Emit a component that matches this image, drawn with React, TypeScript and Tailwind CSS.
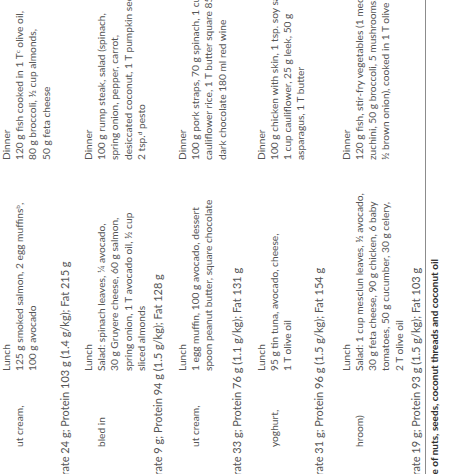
import React from "react";

type Row = {
  gap: string;
  sumGap: string;
  breakfast: string;
  lunch: React.ReactNode[];
  dinner: React.ReactNode[];
  carbs: string;
  rest: string;
};

const sup = (s: string) => <sup className="text-[6.5px]">{s}</sup>;

const rows: Row[] = [
  {
    gap: "mt-[-2.6px]",
    sumGap: "mt-[5.2px]",
    breakfast: "ut cream,",
    lunch: ["Lunch", <>125 g smoked salmon, 2 egg muffins{sup("b")},</>, "100 g avocado"],
    dinner: [
      "Dinner",
      <>120 g fish cooked in 1 T{sup("c")} olive oil,</>,
      "80 g broccoli, ½ cup almonds,",
      "50 g feta cheese",
    ],
    carbs: "Carbohyd",
    rest: "rate 24 g; Protein 103 g (1.4 g/kg); Fat 215 g",
  },
  {
    gap: "mt-[10.8px]",
    sumGap: "mt-[3px]",
    breakfast: "bled in",
    lunch: [
      "Lunch",
      "Salad: spinach leaves, ¼ avocado,",
      "30 g Gruyere cheese, 60 g salmon,",
      "spring onion, 1 T avocado oil, ½ cup",
      "sliced almonds",
    ],
    dinner: [
      "Dinner",
      "100 g rump steak, salad (spinach,",
      "spring onion, pepper, carrot,",
      "desiccated coconut, 1 T pumpkin seeds",
      <>2 tsp.{sup("d")} pesto</>,
    ],
    carbs: "Carbohyd",
    rest: "rate 9 g; Protein 94 g (1.5 g/kg); Fat 128 g",
  },
  {
    gap: "mt-[11.8px]",
    sumGap: "mt-[1px]",
    breakfast: "ut cream,",
    lunch: ["Lunch", "1 egg muffin, 100 g avocado, dessert", "spoon peanut butter, square chocolate"],
    dinner: [
      "Dinner",
      "100 g pork straps, 70 g spinach, 1 cup",
      "cauliflower rice, 1 T butter square 85%",
      "dark chocolate 180 ml red wine",
    ],
    carbs: "Carbohyd",
    rest: "rate 33 g; Protein 76 g (1.1 g/kg); Fat 131 g",
  },
  {
    gap: "mt-[11.8px]",
    sumGap: "mt-[4.2px]",
    breakfast: "yoghurt,",
    lunch: ["Lunch", "95 g tin tuna, avocado, cheese,", "1 T olive oil"],
    dinner: [
      "Dinner",
      "100 g chicken with skin, 1 tsp. soy sauce,",
      "1 cup cauliflower, 25 g leek, 50 g",
      "asparagus, 1 T butter",
    ],
    carbs: "Carbohyd",
    rest: "rate 31 g; Protein 96 g (1.5 g/kg); Fat 154 g",
  },
  {
    gap: "mt-[14.8px]",
    sumGap: "mt-[3px]",
    breakfast: "hroom)",
    lunch: [
      "Lunch",
      "Salad: 1 cup mesclun leaves, ½ avocado,",
      "30 g feta cheese, 90 g chicken, 6 baby",
      "tomatoes, 50 g cucumber, 30 g celery,",
      "2 T olive oil",
    ],
    dinner: [
      "Dinner",
      "120 g fish, stir-fry vegetables (1 medium",
      "zuchini, 50 g broccoli, 5 mushrooms,",
      "½ brown onion), cooked in 1 T olive oil",
    ],
    carbs: "Carbohyd",
    rest: "rate 19 g; Protein 93 g (1.5 g/kg); Fat 103 g",
  },
];

function Lines({ items }: { items: React.ReactNode[] }) {
  return (
    <>
      {items.map((t, i) => (
        <div key={i} className="whitespace-nowrap">
          {t}
        </div>
      ))}
    </>
  );
}

export default function App() {
  return (
    <div className="w-[474px] h-[474px] overflow-hidden bg-white">
      {/* printed sideways in the source, so the table is turned a quarter left */}
      <div className="w-[474px] h-[474px] -rotate-90 bg-white font-['Lato',sans-serif] text-[10.2px] leading-[13.2px] text-[#555]">
        <div className="-ml-[60px] w-[800px]">
          {rows.map((r, i) => (
            <div key={i} className={r.gap}>
              <div className="flex">
                {/* breakfast column, only its tail survives the crop */}
                <div className="w-[160px] shrink-0 flex">
                  <div className="w-[84px] shrink-0" />
                  <div className="flex-1 overflow-hidden">
                    <div className="h-[13.2px]" />
                    <div className="whitespace-nowrap">{r.breakfast}</div>
                  </div>
                </div>
                <div className="w-[211px] shrink-0">
                  <Lines items={r.lunch} />
                </div>
                <div className="flex-1">
                  <Lines items={r.dinner} />
                </div>
              </div>
              <div className={`${r.sumGap} flex whitespace-nowrap text-[11px]`}>
                <span className="w-[55.5px] shrink-0 flex justify-end overflow-hidden">{r.carbs}</span>
                <span>{r.rest}</span>
              </div>
            </div>
          ))}
          <div className="mt-[3.4px] border-t-[1.5px] border-[#8c8c8c]" />
          <div className="pt-[1.5px] flex whitespace-nowrap font-bold text-[10px] text-[#2e2e2e]">
            <span className="w-[56.5px] shrink-0 flex justify-end overflow-hidden">Nut mix: a mixtur</span>
            <span>e of nuts, seeds, coconut threads and coconut oil</span>
          </div>
        </div>
      </div>
    </div>
  );
}
